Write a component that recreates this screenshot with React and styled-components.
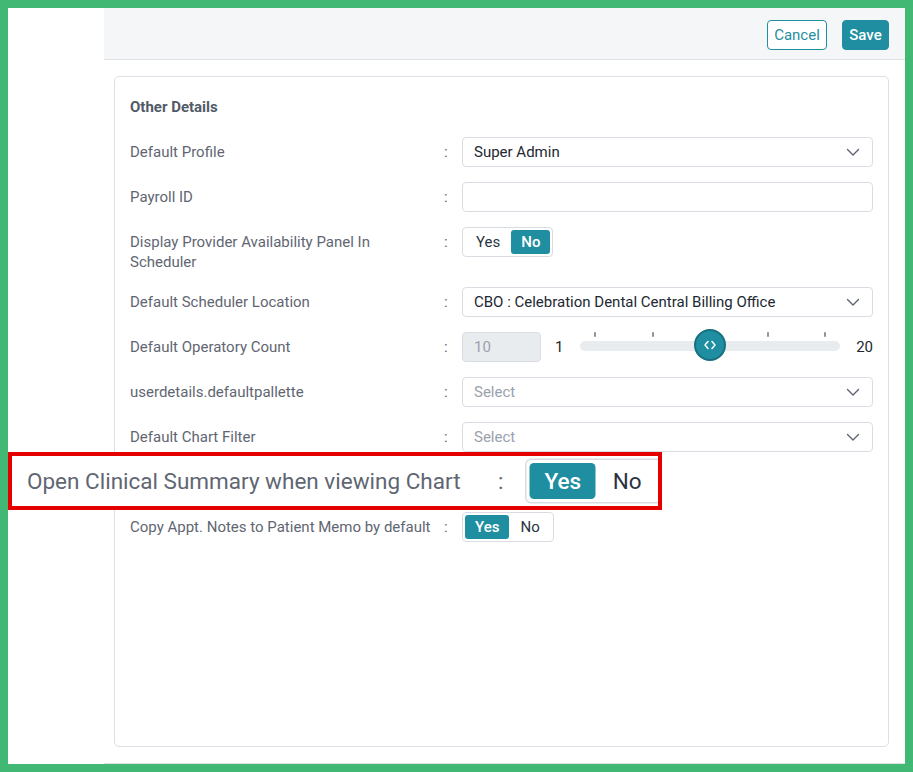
import React from "react";
import styled, { createGlobalStyle } from "styled-components";

const TEAL = "#1f8ea1";

const GlobalStyle = createGlobalStyle`
  html, body {
    margin: 0;
    padding: 0;
    background: #ffffff;
  }
  body {
    font-family: Roboto, "Liberation Sans", Arial, sans-serif;
    font-size: 15px;
  }
  * {
    box-sizing: border-box;
  }
`;

const rows = [
  { label: "Default Profile", type: "select", value: "Super Admin" },
  { label: "Payroll ID", type: "input" },
  { label: "Display Provider Availability Panel In Scheduler", type: "toggle", on: false },
  { label: "Default Scheduler Location", type: "select", value: "CBO : Celebration Dental Central Billing Office" },
  { label: "Default Operatory Count", type: "slider", value: 10 },
  { label: "userdetails.defaultpallette", type: "select", placeholder: "Select" },
  { label: "Default Chart Filter", type: "select", placeholder: "Select" },
  { label: "Open Clinical Summary when viewing Chart", type: "toggle", on: true },
  { label: "Copy Appt. Notes to Patient Memo by default", type: "toggle", on: true },
];

const Chevron = () => (
  <svg width="14" height="14" viewBox="0 0 14 14" fill="none">
    <path d="M1.5 4.5 L7 10 L12.5 4.5" stroke="#5b6470" strokeWidth="1.4" strokeLinecap="round" strokeLinejoin="round" />
  </svg>
);

const ThumbIcon = () => (
  <svg width="12" height="10" viewBox="0 0 12 10" fill="none">
    <path d="M4 1.5 L1 5 L4 8.5 M8 1.5 L11 5 L8 8.5" stroke="#ffffff" strokeWidth="1.5" strokeLinecap="round" strokeLinejoin="round" />
  </svg>
);

const Toggle = ({ on }) => (
  <ToggleBox>
    <ToggleOption $active={on}>Yes</ToggleOption>
    <ToggleOption $active={!on}>No</ToggleOption>
  </ToggleBox>
);

const Control = ({ row }) => {
  if (row.type === "select") {
    return (
      <SelectBox>
        <SelectText $placeholder={!row.value}>{row.value || row.placeholder}</SelectText>
        <Chevron />
      </SelectBox>
    );
  }
  if (row.type === "input") return <TextInput />;
  if (row.type === "toggle") return <Toggle on={row.on} />;
  return (
    <SliderRow>
      <CountInput>{row.value}</CountInput>
      <SliderEnd>1</SliderEnd>
      <Slider>
        <Ticks>
          {[0, 1, 2, 3, 4].map((i) => (
            <Tick key={i} />
          ))}
        </Ticks>
        <Track />
        <Thumb>
          <ThumbIcon />
        </Thumb>
      </Slider>
      <SliderEnd>20</SliderEnd>
    </SliderRow>
  );
};

const FormRow = ({ row }) => (
  <Row>
    <Label>{row.label}</Label>
    <Colon>:</Colon>
    <Control row={row} />
  </Row>
);

const App = () => {
  const highlighted = rows[7];
  return (
    <React.Fragment>
      <GlobalStyle />
      <Frame>
        <SideGap />
        <Main>
          <Header>
            <OutlineButton>Cancel</OutlineButton>
            <PrimaryButton>Save</PrimaryButton>
          </Header>
          <Content>
            <Card>
              <Title>Other Details</Title>
              <Form>
                {rows.map((row) => (
                  <FormRow key={row.label} row={row} />
                ))}
              </Form>
            </Card>
          </Content>
        </Main>
        <Callout>
          <Magnified>
            <FormRow row={highlighted} />
          </Magnified>
        </Callout>
      </Frame>
    </React.Fragment>
  );
};

const Frame = styled.div`
  position: relative;
  width: 913px;
  height: 772px;
  border: 8px solid #41b974;
  display: flex;
  background: #ffffff;
`;

const SideGap = styled.div`
  width: 96px;
  flex-shrink: 0;
`;

const Main = styled.div`
  flex: 1;
  display: flex;
  flex-direction: column;
  border-bottom: 1px solid #dfe3e8;
`;

const Header = styled.div`
  height: 52px;
  flex-shrink: 0;
  background: #f5f6f8;
  border-bottom: 1px solid #dfe3e8;
  display: flex;
  align-items: center;
  justify-content: flex-end;
  gap: 15px;
  padding: 3px 16px 0 0;
`;

const BaseButton = styled.button`
  height: 30px;
  border-radius: 4px;
  font-family: Roboto, "Liberation Sans", Arial, sans-serif;
  font-size: 15px;
  padding: 0;
  cursor: pointer;
`;

const OutlineButton = styled(BaseButton)`
  background: #ffffff;
  border: 1px solid ${TEAL};
  color: ${TEAL};
  width: 60px;
`;

const PrimaryButton = styled(BaseButton)`
  background: ${TEAL};
  border: 1px solid ${TEAL};
  color: #ffffff;
  font-weight: 500;
  width: 47px;
`;

const Content = styled.div`
  flex: 1;
  padding: 16px 16px 16px 10px;
  display: flex;
`;

const Card = styled.div`
  flex: 1;
  border: 1px solid #dcdfe5;
  border-radius: 5px;
  padding: 20px 15px;
`;

const Title = styled.div`
  font-size: 15px;
  line-height: 20px;
  font-weight: 700;
  color: #515a67;
  margin-bottom: 20px;
`;

const Form = styled.div`
  display: flex;
  flex-direction: column;
  gap: 15px;
`;

const Row = styled.div`
  display: grid;
  grid-template-columns: 314px 18px 411px;
  align-items: start;
  min-height: 30px;
`;

const Label = styled.div`
  color: #5f6672;
  font-size: 15px;
  line-height: 20px;
  padding: 5px 7px 0 0;
`;

const Colon = styled.div`
  color: #5f6672;
  line-height: 20px;
  padding-top: 5px;
`;

const SelectBox = styled.div`
  height: 30px;
  border: 1px solid #d9dde3;
  border-radius: 4px;
  display: flex;
  align-items: center;
  justify-content: space-between;
  padding: 0 12px 0 11px;
`;

const SelectText = styled.span`
  color: ${(p) => (p.$placeholder ? "#9aa2ad" : "#222831")};
  font-size: 15px;
`;

const TextInput = styled.div`
  height: 30px;
  border: 1px solid #d9dde3;
  border-radius: 4px;
`;

const ToggleBox = styled.div`
  justify-self: start;
  display: flex;
  height: 30px;
  padding: 2px;
  border: 1px solid #d9dde3;
  border-radius: 4px;
  background: #ffffff;
`;

const ToggleOption = styled.div`
  display: flex;
  align-items: center;
  justify-content: center;
  height: 24px;
  padding: 0 ${(p) => (p.$active ? "10px" : "11px")};
  border-radius: 3px;
  font-size: 15px;
  font-weight: ${(p) => (p.$active ? 500 : 400)};
  background: ${(p) => (p.$active ? TEAL : "transparent")};
  color: ${(p) => (p.$active ? "#ffffff" : "#2b3340")};
`;

const SliderRow = styled.div`
  display: flex;
  align-items: center;
  height: 30px;
`;

const CountInput = styled.div`
  width: 79px;
  height: 30px;
  border: 1px solid #d9dde3;
  border-radius: 4px;
  background: #e9ecef;
  color: #9aa2ad;
  display: flex;
  align-items: center;
  padding-left: 11px;
  margin-right: 14px;
`;

const SliderEnd = styled.span`
  color: #222831;
  font-size: 15px;
`;

const Slider = styled.div`
  position: relative;
  flex: 1;
  height: 30px;
  margin: 0 16px 0 17px;
  display: flex;
  align-items: center;
`;

const Track = styled.div`
  width: 100%;
  height: 10px;
  margin-top: -3px;
  border-radius: 5px;
  background: #e9ecef;
`;

const Ticks = styled.div`
  position: absolute;
  top: 0;
  left: 14px;
  right: 14px;
  display: flex;
  justify-content: space-between;
`;

const Tick = styled.span`
  width: 2px;
  height: 5px;
  border-radius: 1px;
  background: #8d949e;
`;

const Thumb = styled.div`
  position: absolute;
  left: 50%;
  top: 50%;
  width: 32px;
  height: 32px;
  margin: -18px 0 0 -16px;
  border-radius: 50%;
  background: ${TEAL};
  border: 2px solid #17707f;
  display: flex;
  align-items: center;
  justify-content: center;
`;

const Callout = styled.div`
  position: absolute;
  left: 0;
  top: 444px;
  width: 654px;
  height: 58px;
  border: 4px solid #e50000;
  background: #ffffff;
  overflow: hidden;
  display: flex;
  align-items: center;
  padding-left: 15px;
`;

const Magnified = styled.div`
  flex-shrink: 0;
  transform: scale(1.5);
  transform-origin: left center;
`;

export default App;
